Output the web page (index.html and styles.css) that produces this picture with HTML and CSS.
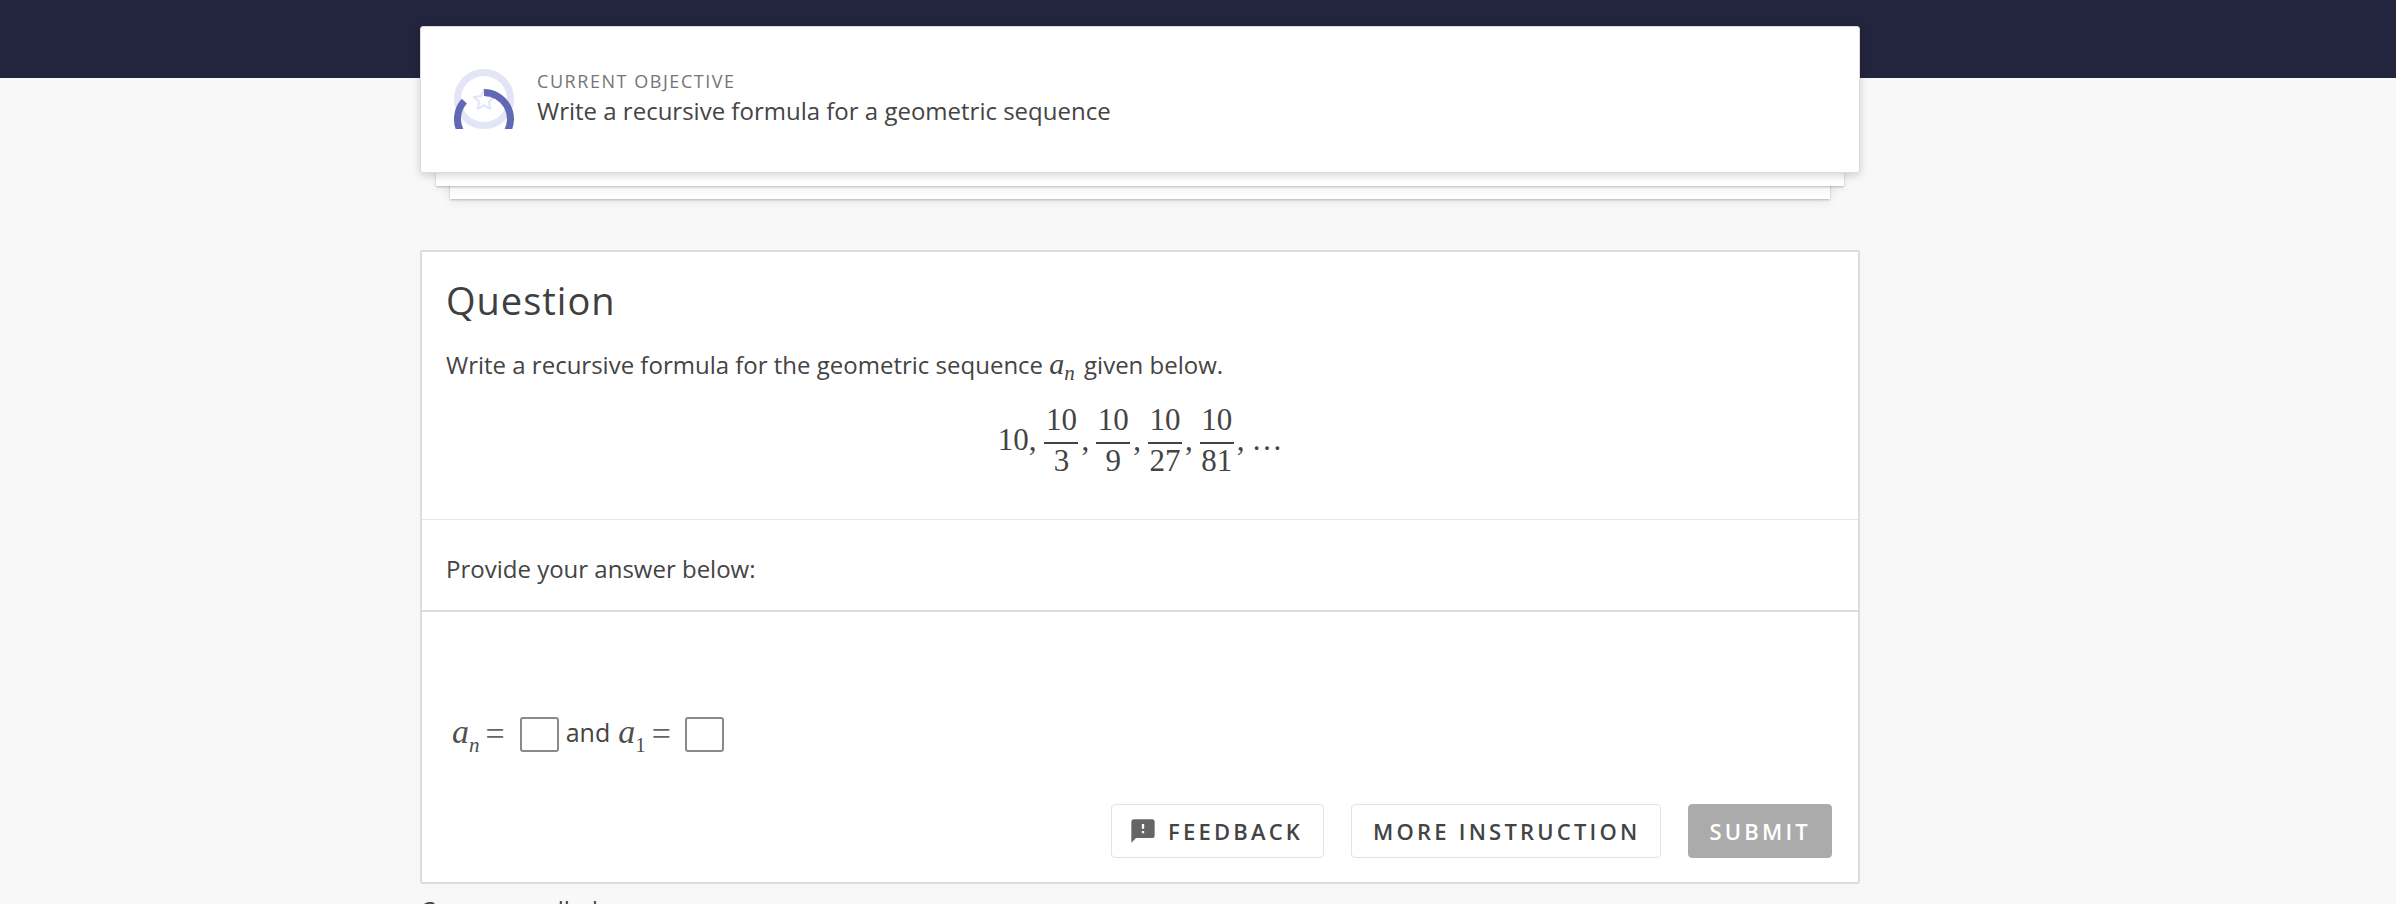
FILE: index.html
```html
<!DOCTYPE html>
<html lang="en">
<head>
<meta charset="utf-8">
<title>Question</title>
<link rel="stylesheet" href="styles.css">
</head>
<body>
<header class="topbar"></header>
<main class="page">
  <section class="stack">
    <div class="objective">
      <svg class="gauge" width="60" height="60" viewBox="0 0 60 60" aria-hidden="true">
        <circle cx="30" cy="30" r="26.5" fill="none" stroke="#e3e4f5" stroke-width="7"/>
        <path d="M30 20.500l3 6.600 7.200.8-5.400 4.800 1.500 7.100L30 36.200l-6.300 3.600 1.500-7.100-5.400-4.800 7.200-.8z" fill="#fff" stroke="#e3e4f5" stroke-width="2" stroke-linejoin="round"/>
        <path d="M10.300 32.200A26.500 26.500 0 0 0 7.500 64M30 23.500A26.500 26.500 0 0 1 52.500 64" fill="none" stroke="#6169b4" stroke-width="7"/>
      </svg>
      <div class="objective-text">
        <div class="eyebrow">CURRENT OBJECTIVE</div>
        <div class="objective-title">Write a recursive formula for a geometric sequence</div>
      </div>
    </div>
    <div class="sheet sheet-one"></div>
    <div class="sheet sheet-two"></div>
  </section>

  <section class="panel">
    <div class="question">
      <h1 class="question-title">Question</h1>
      <p class="prompt">Write a recursive formula for the geometric sequence <span class="math prompt-math"><i>a</i><sub><i>n</i></sub></span> given below.</p>
      <div class="math sequence">
        <span class="seq-item">10,</span>
        <span class="frac"><span class="num">10</span><span class="den">3</span></span><span class="comma">,</span>
        <span class="frac"><span class="num">10</span><span class="den">9</span></span><span class="comma">,</span>
        <span class="frac"><span class="num">10</span><span class="den">27</span></span><span class="comma">,</span>
        <span class="frac"><span class="num">10</span><span class="den">81</span></span><span class="comma">,</span>
        <span class="dots">…</span>
      </div>
    </div>
    <div class="answer-label">Provide your answer below:</div>
    <div class="answer">
      <div class="answer-line">
        <span class="math var"><i>a</i><sub><i>n</i></sub></span>
        <span class="math eq">=</span>
        <span class="box"></span>
        <span class="and">and</span>
        <span class="math var"><i>a</i><sub>1</sub></span>
        <span class="math eq eq-last">=</span>
        <span class="box"></span>
      </div>
      <div class="actions">
        <button class="btn feedback" type="button">
          <svg width="28" height="28" viewBox="0 0 24 24" aria-hidden="true"><path d="M20 2H4c-1.100 0-1.990.9-1.990 2L2 22l4-4h14c1.100 0 2-.9 2-2V4c0-1.100-.9-2-2-2zm-7 12h-2v-2h2v2zm0-4h-2V6h2v4z" fill="#666"/></svg>
          FEEDBACK
        </button>
        <button class="btn more" type="button">MORE INSTRUCTION</button>
        <button class="btn submit" type="button">SUBMIT</button>
      </div>
    </div>
  </section>
  <p class="after">Course enrolled</p>
</main>
</body>
</html>
```

FILE: styles.css
```css
* { box-sizing: border-box; }
html, body { margin: 0; height: 904px; overflow: hidden; }
body { background: #f8f8f8; color: #444; font-family: "Open Sans", sans-serif; }
.topbar { height: 78px; background: #22253d; }
.page { width: 1440px; margin: -52px 0 0 420px; position: relative; }
.stack { position: relative; height: 173px; }
.objective { position: relative; z-index: 3; height: 147px; background: #fff; border: 1px solid #ddd; border-radius: 3px; box-shadow: 0 2px 8px rgba(0,0,0,.18); display: flex; align-items: center; padding: 0 0 1px 33px; }
.gauge { flex: none; }
.objective-text { margin: 0 0 2px 23px; }
.eyebrow { font-size: 18px; line-height: 25px; letter-spacing: 1.55px; color: #757575; }
.objective-title { font-size: 24px; line-height: 34px; }
.sheet { position: absolute; background: #fff; box-shadow: 0 1px 2px rgba(0,0,0,.22), 0 3px 10px rgba(0,0,0,.07); }
.sheet-one { z-index: 2; left: 16px; right: 16px; top: 130px; height: 30px; }
.sheet-two { z-index: 1; left: 30px; right: 30px; top: 140px; height: 33px; }
.panel { margin-top: 51px; height: 634px; background: #fff; border: 2px solid #dcdcdc; border-radius: 3px; }
.question { height: 268px; padding: 24px 24px 0; border-bottom: 1px solid #e6e6e6; }
.question-title { margin: 0; font-size: 38px; line-height: 48px; font-weight: 400; letter-spacing: 1px; color: #3f3f3f; }
.prompt { margin: 23px 0 0; font-size: 24px; line-height: 34px; }
.math { font-family: "Liberation Serif", serif; }
.prompt-math { font-size: 30px; margin-right: 3px; }
.prompt-math sub { font-size: 21px; line-height: 0; vertical-align: -6px; }
.sequence { display: flex; justify-content: center; align-items: center; margin-top: 20px; font-size: 31px; line-height: 36px; }
.seq-item { margin-right: 8px; }
.frac { display: inline-flex; flex-direction: column; align-items: center; width: 34px; }
.num { border-bottom: 2px solid #444; width: 100%; text-align: center; padding-bottom: 4px; }
.den { line-height: 34px; }
.comma { margin: 0 7px 0 3px; }
.answer-label { height: 92px; padding: 6px 24px 0; display: flex; align-items: center; font-size: 24px; border-bottom: 2px solid #dcdcdc; }
.answer { height: 270px; position: relative; }
.answer-line { display: flex; align-items: center; position: absolute; left: 30px; top: 103px; height: 39px; }
.var { font-size: 34px; margin-bottom: 6px; color: #505050; }
.var sub { font-size: 21px; line-height: 0; vertical-align: -9px; }
.eq { font-size: 34px; margin: 0 15px 2px 6px; font-weight: 400; color: #666; }
.eq-last { margin-right: 14px; }
.box { width: 39px; height: 35px; border: 2px solid #8a8a8a; border-radius: 3px; background: #fff; }
.and { font-size: 25px; margin: 0 8px 6px 7px; }
.actions { position: absolute; right: 26px; bottom: 24px; display: flex; gap: 27px; }
.btn { height: 54px; padding: 0 20px 0 21px; background: #fff; border: 1px solid #e3e3e3; border-radius: 4px; font: 600 22px "Open Sans", sans-serif; letter-spacing: 3.2px; color: #444; display: flex; align-items: center; }
.feedback { padding-left: 17px; gap: 11px; }
.submit { padding-left: 20px; background: #ababab; border-color: #ababab; color: #fff; }
.after { margin: 9px 0 0; font-size: 24px; line-height: 34px; }
```
